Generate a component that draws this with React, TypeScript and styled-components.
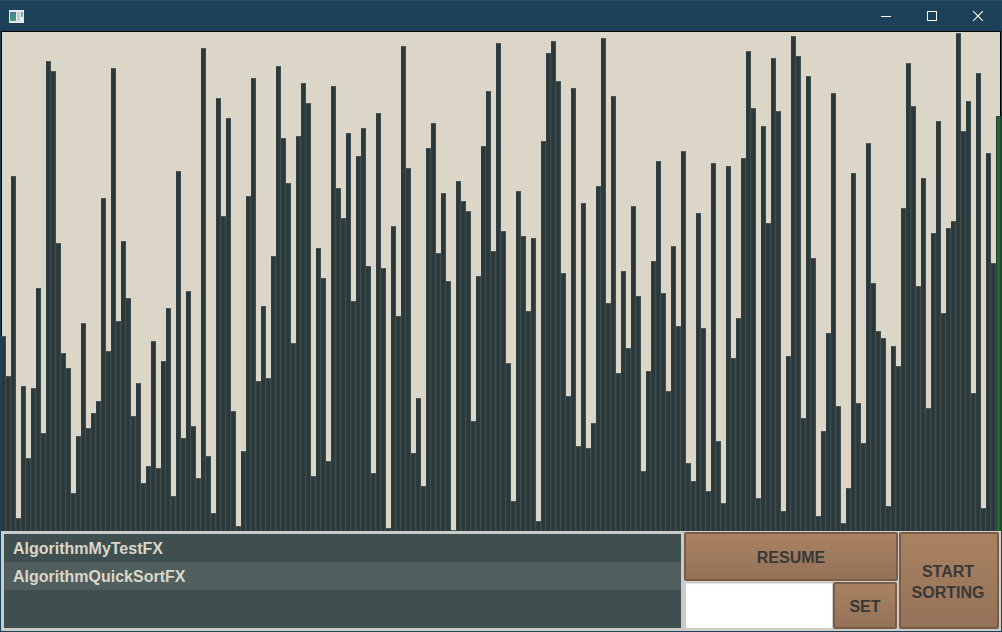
import styled, { createGlobalStyle } from 'styled-components';

const GlobalStyle = createGlobalStyle`
  html, body {
    margin: 0;
    padding: 0;
    background: #1c4158;
  }
`;

// y of the top of each bar in the window, left to right
const BAR_TOPS = [
  336, 376, 176, 518, 386, 458, 388, 288, 433, 61, 71, 243, 353, 368, 493, 436, 323, 428, 413, 401,
  198, 351, 68, 321, 241, 298, 416, 383, 483, 466, 341, 468, 361, 308, 496, 171, 438, 291, 426, 478,
  48, 456, 513, 98, 216, 118, 411, 526, 451, 196, 78, 381, 306, 378, 256, 66, 138, 183, 343, 136,
  83, 103, 476, 248, 278, 461, 86, 188, 218, 133, 301, 156, 128, 266, 473, 113, 268, 528, 226, 316,
  46, 168, 453, 398, 486, 148, 123, 253, 193, 281, 530, 181, 201, 211, 421, 276, 146, 91, 251, 43,
  231, 363, 501, 191, 236, 311, 238, 521, 141, 53, 41, 81, 273, 396, 88, 446, 203, 448, 423, 186,
  38, 303, 96, 373, 271, 348, 206, 296, 471, 371, 261, 161, 293, 391, 246, 326, 151, 463, 481, 213,
  328, 491, 163, 441, 503, 166, 358, 318, 158, 51, 108, 498, 126, 223, 58, 111, 511, 356, 36, 56,
  418, 76, 258, 516, 431, 333, 93, 406, 523, 488, 173, 403, 443, 143, 283, 331, 338, 506, 346, 366,
  208, 63, 106, 286, 178, 408, 233, 121, 313, 228, 221, 33, 131, 101, 393, 73, 508, 153, 263, 116,
];

const CANVAS_BOTTOM = 531;

const Window = styled.div`
  display: flex;
  flex-direction: column;
  width: 1002px;
  height: 632px;
  background: #1c4158;
  box-sizing: border-box;
  padding: 0 1px 1px;
  overflow: hidden;
`;

const TitleBar = styled.div`
  display: flex;
  align-items: center;
  justify-content: space-between;
  height: 31px;
  margin: 0 -1px;
  padding: 0 1px 0 9px;
  box-sizing: border-box;
  border-top: 1px solid #2c5067;
  flex: none;
`;

const WindowButtons = styled.div`
  display: flex;
`;

const WindowButton = styled.div`
  display: flex;
  align-items: center;
  justify-content: center;
  width: 46px;
  height: 30px;
`;

const Canvas = styled.div`
  display: flex;
  align-items: flex-end;
  height: 500px;
  flex: none;
  background: #dcd6c9;
  box-shadow: inset 1px 0 0 #000, inset -1px 0 0 #000, inset 0 1px 0 #000;
`;

const Bar = styled.div<{ $active?: boolean }>`
  width: 5px;
  flex: none;
  box-sizing: border-box;
  background: ${(p) => (p.$active ? '#0b7a12' : '#2c383a')};
  border-top: 1px solid ${(p) => (p.$active ? '#2f4a3a' : '#4c5a5b')};
  border-left: 1px solid ${(p) => (p.$active ? '#2d393b' : '#2f3e41')};
  border-right: 1px solid ${(p) => (p.$active ? '#2d393b' : '#3f4e4f')};
`;

const BottomPanel = styled.div`
  display: flex;
  flex: 1;
  background: #cdcec9;
`;

const AlgorithmList = styled.div`
  width: 683px;
  flex: none;
  box-sizing: border-box;
  border: 3px solid #c9cbc8;
  background: #3f4f4f;
`;

const AlgorithmRow = styled.div<{ $selected?: boolean }>`
  height: 28px;
  box-sizing: border-box;
  padding: 1px 0 0 9px;
  font: bold 16px/28px 'Liberation Sans', Arial, sans-serif;
  color: #dcd6c9;
  background: ${(p) => (p.$selected ? '#505e5e' : 'transparent')};
`;

const Controls = styled.div`
  display: flex;
  flex: 1;
  padding: 1px 2px 2px 0;
  gap: 1px;
`;

const LeftControls = styled.div`
  display: flex;
  flex-direction: column;
  width: 214px;
  flex: none;
  gap: 1px;
`;

const InputRow = styled.div`
  display: flex;
  flex: 1;
  gap: 1px;
  padding-right: 1px;
`;

const ActionButton = styled.button`
  display: flex;
  align-items: center;
  justify-content: center;
  box-sizing: border-box;
  padding: 2px 0 0;
  border: 2px solid #7a5c47;
  border-radius: 2px;
  background: linear-gradient(#a98260, #94725a);
  color: #383838;
  font: bold 16px/21px 'Liberation Sans', Arial, sans-serif;
  text-align: center;
`;

const ResumeButton = styled(ActionButton)`
  height: 49px;
  flex: none;
`;

const SetButton = styled(ActionButton)`
  width: 64px;
  flex: none;
`;

const StartButton = styled(ActionButton)`
  flex: 1;
  padding-right: 2px;
`;

const SizeInput = styled.input`
  flex: 1;
  min-width: 0;
  box-sizing: border-box;
  border: none;
  margin: 1px 0 1px 2px;
  outline: none;
  background: #ffffff;
  box-shadow: inset 0 1px 1px #e4e4e4;
`;

const AppIcon = () => (
  <svg width="15" height="13" viewBox="0 0 15 13">
    <defs>
      <linearGradient id="pane" x1="0" y1="0" x2="0" y2="1">
        <stop offset="0" stopColor="#3f7f9c" />
        <stop offset="1" stopColor="#4a9a7a" />
      </linearGradient>
    </defs>
    <rect width="15" height="13" fill="#e6e8ea" />
    <rect x="1" y="2" width="6" height="9" fill="url(#pane)" />
    <rect x="8" y="2" width="3" height="9" fill="#c4ccd0" />
    <rect x="12" y="2" width="2" height="3" fill="#6aa0c0" />
    <rect x="12" y="5" width="2" height="2" fill="#7ab890" />
  </svg>
);

export default function App() {
  return (
    <Window>
      <GlobalStyle />
      <TitleBar>
        <AppIcon />
        <WindowButtons>
          <WindowButton>
            <svg width="10" height="10" viewBox="0 0 10 10">
              <path d="M0 5.5h10" stroke="#fff" strokeWidth="1" />
            </svg>
          </WindowButton>
          <WindowButton>
            <svg width="10" height="10" viewBox="0 0 10 10">
              <rect x="0.5" y="0.5" width="9" height="9" fill="none" stroke="#fff" strokeWidth="1" />
            </svg>
          </WindowButton>
          <WindowButton>
            <svg width="10" height="10" viewBox="0 0 10 10">
              <path d="M0 0L10 10M10 0L0 10" stroke="#fff" strokeWidth="1.1" />
            </svg>
          </WindowButton>
        </WindowButtons>
      </TitleBar>
      <Canvas>
        {BAR_TOPS.map((top, i) => (
          <Bar key={i} $active={i === BAR_TOPS.length - 1} style={{ height: CANVAS_BOTTOM - top }} />
        ))}
      </Canvas>
      <BottomPanel>
        <AlgorithmList>
          <AlgorithmRow>AlgorithmMyTestFX</AlgorithmRow>
          <AlgorithmRow $selected>AlgorithmQuickSortFX</AlgorithmRow>
        </AlgorithmList>
        <Controls>
          <LeftControls>
            <ResumeButton>RESUME</ResumeButton>
            <InputRow>
              <SizeInput />
              <SetButton>SET</SetButton>
            </InputRow>
          </LeftControls>
          <StartButton>
            START
            <br />
            SORTING
          </StartButton>
        </Controls>
      </BottomPanel>
    </Window>
  );
}
